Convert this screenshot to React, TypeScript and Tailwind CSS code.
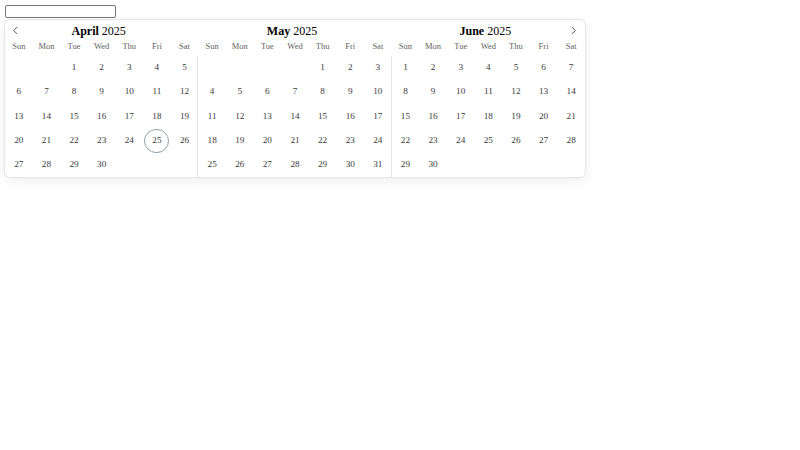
import React from "react";

const WD = ["Sun", "Mon", "Tue", "Wed", "Thu", "Fri", "Sat"];

type M = { name: string; start: number; days: number };
const MONTHS: M[] = [
  { name: "April", start: 2, days: 30 },
  { name: "May", start: 4, days: 31 },
  { name: "June", start: 0, days: 30 },
];

function Chevron({ dir }: { dir: "l" | "r" }) {
  return (
    <svg width="9" height="9" viewBox="0 0 17 17" className="block">
      {dir === "l" ? (
        <path d="M11.5 2 L5 8.5 L11.5 15" fill="none" stroke="#222" strokeWidth="1.5" />
      ) : (
        <path d="M5.5 2 L12 8.5 L5.5 15" fill="none" stroke="#222" strokeWidth="1.5" />
      )}
    </svg>
  );
}

function Month({ m, idx }: { m: M; idx: number }) {
  const cells: (number | null)[] = [];
  for (let i = 0; i < m.start; i++) cells.push(null);
  for (let d = 1; d <= m.days; d++) cells.push(d);
  while (cells.length % 7) cells.push(null);
  return (
    <div className="flex flex-col">
      <div className="relative h-[19px] flex items-end justify-center">
        {idx === 0 && (
          <div className="absolute left-[6px] top-[6px]">
            <Chevron dir="l" />
          </div>
        )}
        {idx === 2 && (
          <div className="absolute right-[7px] top-[6px]">
            <Chevron dir="r" />
          </div>
        )}
        <div className="text-[12px] leading-none text-black translate-y-[-2px] translate-x-[-3px]">
          <span className="font-bold">{m.name}</span> 2025
        </div>
      </div>
      <div className="grid grid-cols-7 h-[17px] items-center">
        {WD.map((w) => (
          <div
            key={w}
            className="text-center text-[8.5px] font-medium text-[#5f5f5f] leading-none translate-y-[-1px]"
          >
            {w}
          </div>
        ))}
      </div>
      <div className={"grid grid-cols-7 " + (idx > 0 ? "shadow-[-1px_0_0_#e6e6e6]" : "")}>
        {cells.map((d, i) => (
          <div key={i} className="h-[24.25px] flex items-center justify-center">
            {d !== null && (
              <div
                className={
                  "w-[25px] h-[24.25px] rounded-full flex items-center justify-center text-[9.2px] text-[#393939] " +
                  (idx === 0 && d === 25 ? "border border-[#959ea9]" : "")
                }
              >
                {d}
              </div>
            )}
          </div>
        ))}
      </div>
    </div>
  );
}

export default function App() {
  return (
    <div
      className="w-[800px] h-[450px] bg-white p-[5px]"
      style={{ fontFamily: '"Liberation Serif", "Times New Roman", serif' }}
    >
      <div className="w-[111px] h-[13px] border border-[#767676] rounded-[2px] bg-white" />
      <div className="mt-[2px] w-[580px] rounded-[5px] bg-white shadow-[1px_0_0_#e6e6e6,-1px_0_0_#e6e6e6,0_1px_0_#e6e6e6,0_-1px_0_#e6e6e6,0_3px_13px_rgba(0,0,0,0.08)] grid grid-cols-3">
        {MONTHS.map((m, i) => (
          <Month key={m.name} m={m} idx={i} />
        ))}
      </div>
    </div>
  );
}
